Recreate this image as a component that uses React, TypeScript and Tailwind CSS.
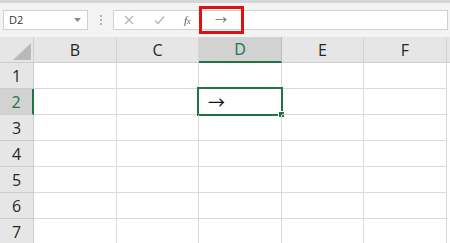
import React from "react";

const cols = [
  { label: "B", w: "w-[83px]" },
  { label: "C", w: "w-[82px]" },
  { label: "D", w: "w-[83px]" },
  { label: "E", w: "w-[82px]" },
  { label: "F", w: "w-[83px]" },
];

const rows = [1, 2, 3, 4, 5, 6, 7];

function FormulaBar() {
  return (
    <div className="h-[37px] shrink-0 border-t-[3px] border-[#d6d6d6] bg-[#f3f3f3] flex items-center">
      <div className="ml-[3px] w-[85px] h-[20px] bg-white border border-[#d0d0d0] flex items-center justify-between pl-[5px] pr-[6px]">
        <span className="text-[11px] text-[#333]">D2</span>
        <svg width="7" height="4" viewBox="0 0 7 4">
          <path d="M0 0 L7 0 L3.5 4 Z" fill="#8a8a8a" />
        </svg>
      </div>
      <div className="w-[25px] flex flex-col items-center gap-[2px]">
        <span className="w-[2px] h-[2px] bg-[#b5b5b5]" />
        <span className="w-[2px] h-[2px] bg-[#b5b5b5]" />
        <span className="w-[2px] h-[2px] bg-[#b5b5b5]" />
      </div>
      <div className="flex-1 mr-[2px] h-[20px] bg-white border border-[#d0d0d0] flex items-center">
        <svg width="10" height="10" viewBox="0 0 10 10" className="ml-[10px]">
          <path d="M1 1 L9 9 M9 1 L1 9" stroke="#b4b4b4" strokeWidth="1.2" />
        </svg>
        <svg width="11" height="10" viewBox="0 0 11 10" className="ml-[20px]">
          <path d="M1 5.5 L4 8.5 L10 1.5" stroke="#b4b4b4" strokeWidth="1.2" fill="none" />
        </svg>
        <span className="ml-[19px] text-[11px] italic text-[#555] font-['Liberation_Serif',serif]">
          f<span className="text-[8px]">x</span>
        </span>
        <div className="ml-[8px] w-[45px] h-[28px] border-[3px] border-[#e01010] flex items-center justify-center">
          <span className="text-[12px] text-[#666] leading-none font-['Noto_Sans_CJK_JP',sans-serif]">→</span>
        </div>
      </div>
    </div>
  );
}

export default function App() {
  return (
    <div className="w-[450px] h-[243px] overflow-hidden bg-white flex flex-col font-['Open_Sans',sans-serif]">
      <FormulaBar />
      <div className="flex h-[26px] shrink-0 bg-[#e6e6e6] border-b border-[#cdcdcd]">
        <div className="w-[34px] border-r border-[#cdcdcd] flex items-end justify-end pr-[2px] pb-[2px]">
          <svg width="18" height="17" viewBox="0 0 18 17">
            <path d="M18 0 L18 17 L0 17 Z" fill="#b9b9b9" />
          </svg>
        </div>
        {cols.map((c) => (
          <div
            key={c.label}
            className={
              c.w +
              " flex items-center justify-center text-[16px] border-r " +
              (c.label === "D"
                ? "bg-[#d2d2d2] text-[#217346] border-[#bdbdbd] border-b-2 border-b-[#217346] -mb-px"
                : "text-[#262626] border-[#d4d4d4]")
            }
          >
            {c.label}
          </div>
        ))}
      </div>
      {rows.map((r) => (
        <div key={r} className="flex h-[26px] shrink-0">
          <div
            className={
              "w-[34px] shrink-0 flex items-center justify-center text-[16px] border-b border-[#cdcdcd] " +
              (r === 2
                ? "bg-[#d2d2d2] text-[#217346] border-r-2 border-r-[#217346]"
                : "bg-[#e6e6e6] text-[#262626] border-r border-r-[#cdcdcd]")
            }
          >
            {r}
          </div>
          {cols.map((c) => (
            <div
              key={c.label}
              className={c.w + " relative shrink-0 border-r border-b border-[#dadada]"}
            >
              {r === 2 && c.label === "D" && (
                <div className="absolute -left-[2px] -top-[2px] w-[86px] h-[29px] border-2 border-[#217346] flex items-center pl-[9px]">
                  <span className="text-[17px] text-[#111] leading-none font-['Noto_Sans_CJK_JP',sans-serif]">→</span>
                  <span className="absolute -right-[4px] -bottom-[4px] w-[7px] h-[7px] bg-[#217346] border border-white" />
                </div>
              )}
            </div>
          ))}
        </div>
      ))}
    </div>
  );
}
